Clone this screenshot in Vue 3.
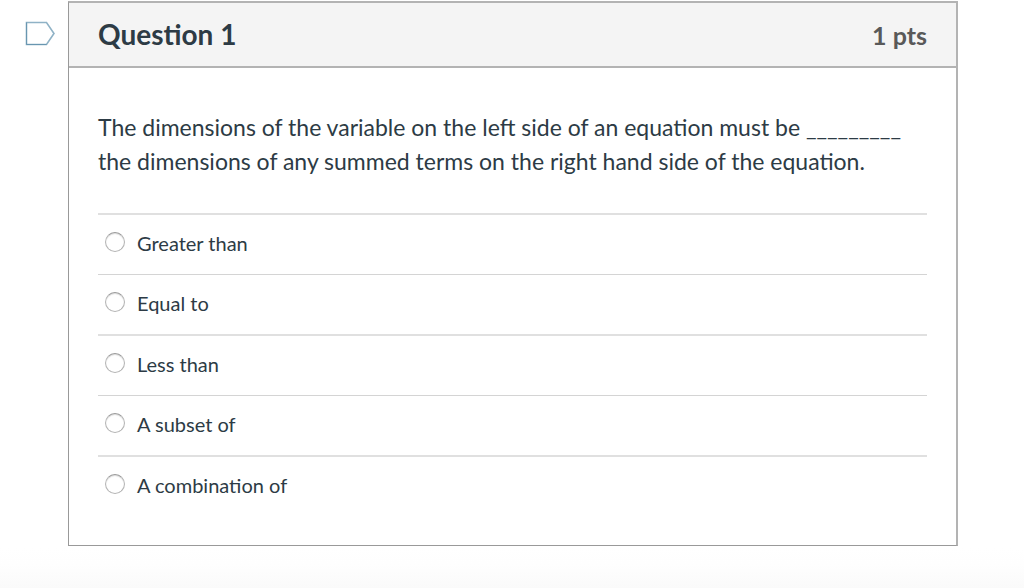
<script setup>
import { ref } from 'vue'
const answers = ['Greater than', 'Equal to', 'Less than', 'A subset of', 'A combination of']
const selected = ref('')
</script>

<template>
  <main class="page">
    <button class="flag" type="button" aria-label="Flag question">
      <svg width="30" height="25" viewBox="0 0 30 25"><path d="M1.5 1.5H21.5L29 12.5L21.5 23.5H1.5Z" fill="#fff" stroke="#8fb2c6" stroke-width="1.6" /><path d="M21.5 23.5H1.5V1.5" fill="none" stroke="#6896b0" stroke-width="1" /></svg>
    </button>
    <section class="question">
      <header class="head">
        <h2>Question 1</h2>
        <span class="points">1 pts</span>
      </header>
      <div class="body">
        <p id="prompt">The dimensions of the variable on the left side of an equation must be _________ the dimensions of any summed terms on the right hand side of the equation.</p>
        <div role="radiogroup" aria-labelledby="prompt">
          <label v-for="a in answers" :key="a" class="answer">
            <input v-model="selected" type="radio" name="answer" :value="a" />
            <span>{{ a }}</span>
          </label>
        </div>
      </div>
    </section>
  </main>
</template>

<style>
body { background: #fff; }
</style>

<style scoped>
.page { display: flex; align-items: flex-start; box-sizing: border-box; min-height: 100vh; padding: 1px 66px 42px 25px; font-family: Lato, "Liberation Sans", sans-serif; color: #2d3b45; background: linear-gradient(to top, #fafafa, #fefefe 24px, #fff 40px); }
.flag { flex: none; width: 30px; height: 25px; margin: 20px 13px 0 0; padding: 0; border: 0; background: none; }
.flag svg { display: block; }
.question { flex: 1; border: solid; border-width: 2px 2px 1px 1px; border-color: #b3b3b3 #b3b3b3 #999 #999; background: #fff; }
.head { display: flex; justify-content: space-between; align-items: center; box-sizing: border-box; padding: 0 29px 2px; height: 65px; border-bottom: 2px solid #b3b3b3; background: #f4f4f4; }
h2 { margin: 0; font-size: 28px; line-height: 36px; font-weight: 700; }
.points { padding-top: 2px; font-size: 25px; line-height: 36px; font-weight: 700; color: #595959; }
.body { padding: 42px 29px 29px; }
p { margin: 0 0 35px; font-size: 23px; line-height: 34px; }
.answer { display: flex; align-items: center; gap: 12px; box-sizing: border-box; height: 60px; padding: 0 0 4px 7px; border-top: 1px solid #d4d4d4; font-size: 20px; line-height: 24px; }
.answer:nth-child(odd) { height: 61px; border-top: 2px solid #e0e0e0; }
input { appearance: none; flex: none; box-sizing: border-box; width: 20px; height: 20px; margin: 0 0 2px; border: 1px solid #b4b4b4; border-top-color: #999; border-radius: 50%; background: #fff; box-shadow: inset 0 1px 1px #ddd; }
input:checked { border: 6px solid #0374b5; }
</style>
